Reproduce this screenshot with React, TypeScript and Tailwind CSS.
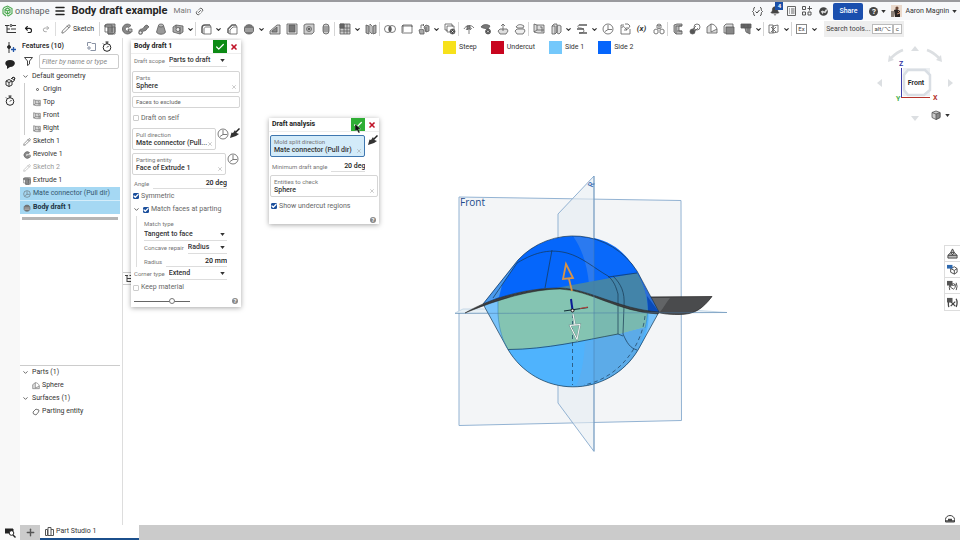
import React from 'react';
import { Menu, Link2, Undo2, Redo2, ChevronDown, Check, X, Bell, Plus, Pencil } from 'lucide-react';

const GLYPHS: Record<string, React.ReactNode> = {
  extrude: (
    <>
      <path d="M1 2l2-1h8v8l-2 2H4V4H1z" fill="#aaa" />
      <path d="M1 2h7v7M1 2v7h3M4 4h7v7H4z" />
      <path d="M6 4v7M8 4v7" />
    </>
  ),
  revolve: (
    <>
      <path d="M10 2.500A5 5 0 1 0 10 9.500L7.500 7.500A2 2 0 1 1 7.500 4.500z" fill="#888" />
      <path d="M7 6h4v3H8z" fill="#bbb" />
    </>
  ),
  sweep: (
    <>
      <path d="M1 9c0-2 1-3 3-3s2-4 5-4l2 2c-2 0-2 4-5 4-1 0-2 1-2 3H1z" fill="#888" />
      <circle cx="2.500" cy="9.500" r="1.500" fill="#eee" />
    </>
  ),
  loft: (
    <>
      <path d="M3.500 2.500L1.500 9c1 3 8 3 9 0l-2-6.500z" fill="#999" />
      <ellipse cx="6" cy="2.500" rx="2.500" ry="1.500" fill="#bbb" />
    </>
  ),
  thicken: (
    <>
      <path d="M1 4l3-2 7 1v6l-3 2-7-2z" fill="#aaa" />
      <circle cx="6" cy="6.500" r="2" fill="#eee" />
      <path d="M4 2v3M8 4v7" />
    </>
  ),
  fillet: (
    <>
      <path d="M2 10V5c0-2 1-3 3-3h5" strokeWidth="1.500" />
      <path d="M2 10l2 1V6c0-1 1-2 2-2h5l-1-2M11 4v7H4" />
    </>
  ),
  chamfer: (
    <>
      <path d="M2 10V6l4-4h4" strokeWidth="1.500" />
      <path d="M2 10l2 1V7l3-3h4l-1-2M11 4v7H4" />
    </>
  ),
  draft: (
    <>
      <path d="M1.500 5C2 .5 10 .5 10.500 5v3c-1 4-8 4-9 0z" fill="#777" />
      <path d="M2 6h8M2 8h8" stroke="#ddd" />
    </>
  ),
  rib: (
    <>
      <path d="M1 8l7-6h3v9H1z" fill="#ccc" />
      <path d="M3 8l5-4v5H3z" fill="#888" />
    </>
  ),
  shell: (
    <>
      <path d="M1 1h10v10H1z" fill="#ddd" />
      <path d="M3 2h6v7H3z" fill="#777" />
    </>
  ),
  hole: (
    <>
      <path d="M1 2l2-1h8v8l-2 2H1z" fill="#ccc" />
      <circle cx="6" cy="6" r="2.500" />
      <circle cx="6" cy="6" r="1" fill="#444" />
    </>
  ),
  thread: (
    <>
      <rect x="3" y="1" width="6" height="10" rx="3" fill="#ccc" />
      <path d="M3 4h6M3 6h6M3 8h6" />
    </>
  ),
  pattern: (
    <>
      <path d="M1 1h10v10H1z" fill="#ccc" />
      <path d="M5 1v10M1 5h10M8 1v10M1 8h10" />
      <path d="M1 1h4v4H1z" fill="#666" />
    </>
  ),
  mirror: (
    <>
      <path d="M1 2l3 1v8l-3-1zM11 2L8 3v8l3-1z" fill="#aaa" />
      <path d="M5 1l2 2v8L5 9z" />
    </>
  ),
  boolean: (
    <>
      <circle cx="4" cy="6" r="3.500" />
      <circle cx="8" cy="6" r="3.500" />
      <path d="M6 3.500v5" strokeWidth="2" />
    </>
  ),
  split: (
    <>
      <path d="M1 3h10v7H1z" />
      <path d="M1 3l1-1h9v2M2 2v7" />
    </>
  ),
  transform: (
    <>
      <path d="M1 7l2-1 3 1v4H2zM6 4l2-2 3 1v5L8 9z" fill="#aaa" />
      <path d="M3 5V2h3M5 1l1 1-1 1M8 4v5" />
    </>
  ),
  remove: (
    <>
      <path d="M1 1h7v2h2v5M1 1v6h2v2h3M3 3h6M3 3v5" />
      <circle cx="8.500" cy="8.500" r="2.500" fill="#444" />
      <path d="M7.500 7.500l2 2M9.500 7.500l-2 2" stroke="#fff" />
    </>
  ),
  face: (
    <>
      <path d="M1 6c2-4 7-5 10-1M3 7c2-3 4-3 6-1M6 11V5M4 7l2-2 2 2" />
      <path d="M4 3h3v3H4z" fill="#888" />
    </>
  ),
  deleteFace: (
    <>
      <path d="M1 4c2-3 6-3 9-1L8 6 3 5z" fill="#777" />
      <circle cx="8" cy="8.500" r="2.500" fill="#444" />
      <path d="M7 7.500l2 2M9 7.500l-2 2" stroke="#fff" />
    </>
  ),
  moveFace: (
    <>
      <path d="M1 8l2-2h7l1 2-2 3H3z" fill="#ddd" />
      <path d="M6 8V1M4 3l2-2 2 2" />
    </>
  ),
  offsetFace: <path d="M1 8l2-2h7l1 2-2 3H3zM2 4c2-3 5-3 8-1l-1 2H4z" fill="#eee" />,
  plane: (
    <>
      <path d="M1 1l3 1h7v8H5L1 9z" fill="#ddd" />
      <path d="M4 2v5h7M4 7l-3 2M7 4h2v5" />
    </>
  ),
  helix: (
    <>
      <path d="M2 3l2-2h3v8l-2 2H2zM7 3l2-1 2 1v6l-2 2-2-1z" fill="#ddd" />
      <path d="M5 3v8M2 3h3" />
    </>
  ),
  curve: (
    <>
      <path d="M3 2h8M1 6h7M3 10h8" strokeWidth="1.600" />
      <path d="M3 2C1 3 2 5 4 5s4 1 4 3-4 2-5 2" />
    </>
  ),
  mate: (
    <>
      <circle cx="6" cy="6" r="5" />
      <path d="M6 2v4.500h4M6 6.500L3 8.500" />
    </>
  ),
  importer: (
    <>
      <path d="M5 2H2v9h9V6" />
      <path d="M3 5c0-2 2-2 3 0l2 2M8 4v3H5M6 1h3l2 2-2 3" />
    </>
  ),
  composite: (
    <>
      <path d="M4 2l2-1 2 1v3L6 6 4 5zM1 7l2-1 2 1v3l-2 1-2-1zM7 7l2-1 2 1v3l-2 1-2-1z" />
      <path d="M4 2l2 1 2-1M6 3v3" />
    </>
  ),
  frame: (
    <>
      <path d="M2 2l3-1h5v2H7v5h3v3H4L2 9z" fill="#bbb" />
      <path d="M4 3h6M4 3v8M5 8h5" />
    </>
  ),
  chain: (
    <>
      <circle cx="3.500" cy="8.500" r="2.500" fill="#555" />
      <circle cx="8" cy="4" r="3" />
      <path d="M4 6l3-3M6 8l3-3" />
    </>
  ),
  bend: (
    <>
      <path d="M1 4l4-3v8l6-3v4H1z" fill="#ddd" />
      <path d="M5 1c3 0 5 2 6 5" />
    </>
  ),
  block: (
    <>
      <path d="M1 3l2-2h7v7l-2 2H1z" fill="#ddd" />
      <path d="M3 4h8v7H3z" fill="#888" />
    </>
  ),
  tab: (
    <>
      <path d="M1 1h10v4H1z" fill="#666" />
      <path d="M5 5h5v6L6 9z" fill="#999" />
      <path d="M4 1v4M8 1v9" />
    </>
  ),
  flange: <path d="M1 2h4v8H1zM5 3l5-1v7l-5 1zM3 4l5 5M8 4L3 9" />,
};

const SmallIcon = ({ name, size = 12 }: { name: string; size?: number }) => (
  <svg
    width={size}
    height={size}
    viewBox="0 0 12 12"
    fill="none"
    stroke="currentColor"
    strokeWidth="0.800"
    strokeLinejoin="round"
    className="shrink-0 text-[#5c5c5c]"
    aria-hidden="true"
  >
    {GLYPHS[name]}
  </svg>
);

// '|' draws a divider, 'v' the arrow that opens a tool group
const TOOLS =
  '| extrude revolve sweep loft thicken v | fillet v chamfer draft v rib shell hole thread | pattern v mirror | boolean split transform v remove | face deleteFace moveFace offsetFace | plane helix v curve v mate importer (x) composite | frame chain bend block tab v | flange v | Ex v'.split(
    ' '
  );

const Caret = () => (
  <svg width="5" height="3" viewBox="0 0 6 4" className="shrink-0" aria-hidden="true">
    <path d="M0 0h6L3 4z" fill="#333" />
  </svg>
);

function Header() {
  return (
    <header className="flex h-5 items-center border-t-2 border-[#9a9a9e] bg-[#f7f8fa] pl-0.5 pr-[3px]">
      <svg width="11" height="12" viewBox="0 0 22 24" fill="none" stroke="#4aa84f" strokeWidth="2.200">
        <path d="M4 5l7-3 9 5v10l-7 5-3-1M2 8v9l6 5M4 5l-2 3" />
        <path d="M6 9l5-3 5 3v6l-5 3-5-3zM6 9l5 3 5-3M11 12v6" />
      </svg>
      <span className="ml-0.5 text-[9px] leading-4 text-[#5c5f63]">onshape</span>
      <button aria-label="Main menu" className="ml-[5px]">
        <Menu size={12} strokeWidth={3} className="text-[#222]" />
      </button>
      <h1 className="ml-[5px] whitespace-nowrap text-[11px] font-bold leading-4 text-[#252525]">Body draft example</h1>
      <span className="ml-1.5 text-[8px] text-[#777]">Main</span>
      <Link2 size={9} className="ml-1 -rotate-45 text-[#444]" />
      <div className="ml-auto flex shrink-0 items-center">
        <button aria-label="Configurations" className="flex w-4 justify-center">
          <svg width="11" height="9" viewBox="0 0 11 9" fill="none" stroke="#444">
            <path d="M3 .5c-2 0-1 2-1.500 3L.5 4.500l1 1C2 6.500 1 8.500 3 8.500M8 .5c2 0 1 2 1.500 3l1 1-1 1C9 6.500 10 8.500 8 8.500M3.500 4.500l1.500 1.500 2.500-3" />
          </svg>
        </button>
        <button aria-label="Notifications" className="relative ml-0.5 flex w-4 justify-center">
          <Bell size={10} fill="#444" className="text-[#444]" />
          <span className="absolute -top-1 left-2 h-2 w-2 bg-[#1b50a8] text-center text-[6px] font-bold leading-2 text-white">
            4
          </span>
        </button>
        <button aria-label="Release management" className="flex w-4 justify-center">
          <svg width="9" height="10" viewBox="0 0 9 10" fill="none" stroke="#666">
            <path d="M.5.5h8v9h-8zM2 3h1M4 3h3.500M2 5h1M4 5h3.500M2 7h1M4 7h3.500" />
          </svg>
        </button>
        <button aria-label="App store" className="flex w-4 justify-center">
          <svg width="10" height="10" viewBox="0 0 10 10" fill="none" stroke="#555">
            <path d="M.5.5h3v3h-3zM.5 6h3v3h-3zM6 6h3v3H6zM7.500 0v4.500M5.500 2.500h4.500" />
          </svg>
        </button>
        <button aria-label="Learning center" className="flex w-4 justify-center">
          <svg width="9" height="9" viewBox="0 0 10 10">
            <circle cx="5" cy="5" r="4.800" fill="#444" />
            <path d="M2 5l2-1 2 1 2-3 1 2-2 3-2-1-1 2z" fill="#ddd" />
          </svg>
        </button>
        <button className="ml-0.5 h-[17px] w-[30px] rounded-[2px] bg-[#1b4fae] text-[7px] font-medium text-white">
          Share
        </button>
        <button aria-label="Help" className="ml-1.5 flex items-center gap-[3px]">
          <span className="h-[9px] w-[9px] rounded-full bg-[#444] text-center text-[8px] font-bold leading-[9px] text-white">
            ?
          </span>
          <Caret />
        </button>
        <button className="ml-[5px] flex items-center gap-[3px] text-[7px] text-[#333]">
          <svg width="11" height="12" viewBox="0 0 11 12">
            <path fill="#ead9cc" d="M0 0h11v12H0z" />
            <path fill="#8b8179" d="M0 6h3v6H0z" />
            <path fill="#2b2523" d="M3 5l3-1 3 2v6H4z" />
            <circle cx="6" cy="3" r="1.600" fill="#6b4636" />
            <path d="M7 6l2 2-3 1" stroke="#c58d70" fill="none" />
          </svg>
          <span className="whitespace-nowrap">Aaron Magnin</span>
          <Caret />
        </button>
      </div>
    </header>
  );
}

function Toolbar() {
  return (
    <div className="flex h-[18px] items-center overflow-hidden bg-white text-[#444]" role="toolbar">
      <button aria-label="Undo" className="flex w-[17px] shrink-0 justify-center">
        <Undo2 size={9} strokeWidth={3} className="text-[#222]" />
      </button>
      <button aria-label="Redo" className="flex w-[17px] shrink-0 justify-center">
        <Redo2 size={8} strokeWidth={3} className="text-[#aaa]" />
      </button>
      <span className="mx-px h-3.5 w-px shrink-0 bg-[#ddd]" />
      <button className="flex w-[42px] shrink-0 items-center gap-0.5 pl-1 text-[7px] text-[#333]">
        <Pencil size={10} strokeWidth={1.5} />
        Sketch
      </button>
      {TOOLS.map((tool, i) => {
        if (tool === '|') {
          return <span key={i} className="mr-px h-3.5 w-px shrink-0 bg-[#d5d5d5]" />;
        }
        if (tool === 'v') {
          return (
            <button key={i} aria-label="More tools" className="flex w-[9px] shrink-0 justify-center">
              <ChevronDown size={7} strokeWidth={4} className="text-[#333]" />
            </button>
          );
        }
        return (
          <button key={i} aria-label={tool} className="flex w-[17px] shrink-0 items-center justify-center">
            {tool === '(x)' ? (
              <span className="text-[8px] font-bold italic text-[#333]">(x)</span>
            ) : tool === 'Ex' ? (
              <span className="border border-[#888] px-px text-[6px] leading-2">Ex</span>
            ) : (
              <SmallIcon name={tool} />
            )}
          </button>
        );
      })}
      <button className="ml-[5px] flex h-4 w-20 shrink-0 items-center justify-center whitespace-nowrap bg-[#eee] text-[7px] text-[#444]">
        Search tools...
        <kbd className="ml-0.5 border border-[#bbb] bg-white px-px font-[inherit] text-[6px] leading-2">alt/⌥</kbd>
        <kbd className="border border-[#bbb] bg-white px-0.5 font-[inherit] text-[6px] leading-2">c</kbd>
      </button>
    </div>
  );
}

function LeftRail() {
  return (
    <nav className="flex w-5 shrink-0 flex-col items-center bg-[#f8f8f8] text-[#333]">
      <button aria-label="Feature list" className="flex h-[18px] items-center">
        <svg width="11" height="10" viewBox="0 0 11 10" fill="none" stroke="currentColor">
          <path d="M0 1.500h4M2 1v8M2 5h3M7 1.500h4M6 5h5M2 8.500h9" />
          <circle cx="6" cy="1.500" r="1" />
        </svg>
      </button>
      <button aria-label="Add version" className="flex h-[18px] items-center">
        <svg width="11" height="11" viewBox="0 0 11 11" fill="none" stroke="currentColor">
          <path d="M4 0v11" />
          <circle cx="4" cy="5" r="1.500" fill="#222" />
          <path d="M8.500 5v5M6 7.500h5" stroke="#2256a8" strokeWidth="1.300" />
        </svg>
      </button>
      <button aria-label="Comments" className="flex h-[16px] items-center">
        <svg width="10" height="9" viewBox="0 0 10 9">
          <path d="M5 0c7 0 6 7 0 7L2 9V6C-1 4 0 0 5 0z" fill="#222" />
        </svg>
      </button>
      <button aria-label="Integrations" className="flex h-[19px] items-center">
        <svg width="11" height="11" viewBox="0 0 11 11" fill="none" stroke="currentColor">
          <path d="M1 5l3-1.500L7 5v4l-3 1.500L1 9zM1 5l3 1.500L7 5M4 6.500v4M6 3l2-2 2 1-1 3-2 1" />
          <circle cx="8.500" cy="2.500" r="1" />
        </svg>
      </button>
      <button aria-label="History" className="flex h-[18px] items-center">
        <Stopwatch />
      </button>
      <button aria-label="Search" className="mb-0.5 mt-auto">
        <svg width="11" height="10" viewBox="0 0 11 10" fill="none" stroke="#222">
          <path d="M0 1h8v2L5 5H0z" fill="#222" />
          <circle cx="6.500" cy="5" r="2.300" fill="#fff" />
          <path d="M8 7l2.500 2.500" strokeWidth="1.400" />
        </svg>
      </button>
    </nav>
  );
}

function Stopwatch() {
  return (
    <svg width="10" height="11" viewBox="0 0 10 11" fill="none" stroke="#222">
      <circle cx="5" cy="6.500" r="3.800" />
      <path d="M3.500 1h3M5 1v2M5 6.500l1.500-1.500M1 2.500l1 1" />
    </svg>
  );
}

interface TreeRow {
  label: string;
  icon: string;
  state?: 'muted' | 'selected' | 'active';
}

const FEATURES: TreeRow[] = [
  { label: 'Sketch 1', icon: 'pencil' },
  { label: 'Revolve 1', icon: 'revolve' },
  { label: 'Sketch 2', icon: 'pencil', state: 'muted' },
  { label: 'Extrude 1', icon: 'extrude' },
  { label: 'Mate connector (Pull dir)', icon: 'mate', state: 'selected' },
  { label: 'Body draft 1', icon: 'draft', state: 'active' },
];

function GroupRow({ label }: { label: string }) {
  return (
    <button className="flex h-[13px] w-full items-center gap-[3px] pl-0.5 text-left">
      <ChevronDown size={7} strokeWidth={3} className="shrink-0 text-[#555]" />
      {label}
    </button>
  );
}

function FeaturePanel() {
  return (
    <aside className="flex w-[103px] shrink-0 flex-col border-r border-[#ddd] bg-white text-[7px] leading-[13px] text-[#333]">
      <div className="flex h-4 items-center pl-0.5 pt-px">
        <h2 className="font-medium text-[#222]">Features (10)</h2>
        <button aria-label="Add folder" className="ml-auto">
          <svg width="9" height="9" viewBox="0 0 9 9" fill="none" stroke="#8a93a5">
            <path d="M.5 4V.5H4l1 1h3.500v7h-5M0 6h4M2 4v4" />
          </svg>
        </button>
        <button aria-label="Rollback history" className="ml-1.5 mr-2.5">
          <Stopwatch />
        </button>
      </div>
      <div className="flex items-center gap-1.5 pl-1 pr-[3px]">
        <svg width="9" height="9" viewBox="0 0 9 9" fill="none" stroke="#444" className="shrink-0">
          <path d="M.5.5h8L5.500 4v3L3.500 8.500V4z" />
        </svg>
        <input
          aria-label="Filter features"
          placeholder="Filter by name or type"
          className="h-[15px] w-full min-w-0 rounded-[2px] border border-[#ccc] px-0.5 italic leading-3 outline-none placeholder:text-[#888]"
        />
      </div>
      <div className="pr-0.5 pt-px">
        <GroupRow label="Default geometry" />
        <ul className="ml-1 border-l border-[#ccc] pl-2">
          {['Origin', 'Top', 'Front', 'Right'].map((name) => (
            <li key={name}>
              <button className="flex h-[13px] items-center gap-0.5">
                <span className="flex w-2 shrink-0 justify-center">
                  {name === 'Origin' ? (
                    <span className="h-[3px] w-[3px] rounded-full border border-[#555]" />
                  ) : (
                    <SmallIcon name="plane" size={8} />
                  )}
                </span>
                {name}
              </button>
            </li>
          ))}
        </ul>
        <ul>
          {FEATURES.map(({ label, icon, state }) => (
            <li
              key={label}
              className={
                state === 'active'
                  ? 'bg-[#a5d8f3] font-bold text-[#1c3141]'
                  : state === 'selected'
                    ? 'border-b border-[#d4edfa] bg-[#a5d8f3] text-[#34566d]'
                    : state === 'muted'
                      ? 'text-[#999]'
                      : ''
              }
            >
              <button className="flex h-[13px] w-full items-center gap-0.5 whitespace-nowrap pl-[3px] text-left">
                {icon === 'pencil' ? (
                  <Pencil size={8} strokeWidth={1.5} className="shrink-0" />
                ) : (
                  <SmallIcon name={icon} size={8} />
                )}
                {label}
              </button>
            </li>
          ))}
        </ul>
        <div className="ml-0.5 mr-0.5 mt-[3px] h-[3px] bg-[#b5b5b5]" />
      </div>
      <div className="mr-0.5 mt-auto h-40 border-t border-[#ccc]">
        <GroupRow label="Parts (1)" />
        <button className="flex h-[13px] items-center gap-0.5 pl-3">
          <SmallIcon name="bend" size={8} />
          Sphere
        </button>
        <GroupRow label="Surfaces (1)" />
        <button className="flex h-[13px] items-center gap-0.5 pl-3">
          <svg width="8" height="8" viewBox="0 0 8 8" fill="none" stroke="#777">
            <path d="M1 4l3-3 1 .5 2 .5-.5 2L4 7l-1-.5L1.500 6z" />
          </svg>
          Parting entity
        </button>
      </div>
    </aside>
  );
}

function DialogHead({ title, confirm }: { title: string; confirm: string }) {
  return (
    <div className="flex h-[13px] items-center pl-[3px] shadow-[0_1px_0_#eee]">
      <h3 className="mr-auto font-bold text-[#222]">{title}</h3>
      <button aria-label="Accept" className={`flex h-[13px] w-[14px] items-center justify-center ${confirm}`}>
        <Check size={10} strokeWidth={3} className="text-white" />
      </button>
      <button aria-label="Cancel" className="flex w-[14px] justify-center">
        <X size={8} strokeWidth={5} className="text-[#c01328]" />
      </button>
    </div>
  );
}

interface EntityBoxProps {
  label: string;
  value: string;
  active?: boolean;
}

function EntityBox({ label, value, active }: EntityBoxProps) {
  return (
    <div
      className={`min-w-0 flex-1 rounded-[2px] border pl-[3px] ${
        active ? 'border-[#3f77b0] bg-[#d3ebf9]' : 'border-[#d5d5d5]'
      }`}
    >
      <div className="pt-px text-[6px] leading-[9px] text-[#777]">{label}</div>
      <div className="flex items-center justify-between pb-px leading-[9px] text-[#333]">
        <span className="whitespace-nowrap font-medium">{value}</span>
        <button aria-label={`Clear ${label}`} className="mr-0.5 shrink-0">
          <X size={6} strokeWidth={2} className="text-[#999]" />
        </button>
      </div>
    </div>
  );
}

function CheckField({ label, checked = false }: { label: string; checked?: boolean }) {
  return (
    <label className="flex items-center gap-0.5 whitespace-nowrap text-[#666]">
      <span className="relative flex h-1.5 w-1.5">
        <input
          type="checkbox"
          defaultChecked={checked}
          className="peer h-1.5 w-1.5 appearance-none rounded-[1px] border border-[#ccc] bg-white checked:border-[#1b4f9c] checked:bg-[#1b4f9c]"
        />
        <Check
          size={6}
          strokeWidth={5}
          className="pointer-events-none absolute inset-0 text-white opacity-0 peer-checked:opacity-100"
        />
      </span>
      {label}
    </label>
  );
}

function SelectField({ label, value, stacked }: { label: string; value: string; stacked?: boolean }) {
  return (
    <label className={stacked ? 'block' : 'flex items-center gap-1'}>
      <span className="block whitespace-nowrap text-[6px] leading-[9px] text-[#777]">{label}</span>
      <span className="flex min-w-0 flex-1 items-center border-b border-[#ddd] pr-0.5">
        <select className="h-3 min-w-0 flex-1 appearance-none bg-transparent font-medium text-[#333] outline-none">
          <option>{value}</option>
        </select>
        <Caret />
      </span>
    </label>
  );
}

function ValueField({ label, value, wide }: { label: string; value: string; wide?: boolean }) {
  return (
    <label className="flex items-center gap-1 whitespace-nowrap text-[6px] text-[#777]">
      {label}
      <input
        defaultValue={value}
        className={`h-[11px] min-w-0 border-b border-[#ddd] text-right text-[7px] font-medium text-[#222] outline-none ${
          wide ? 'w-[34px]' : 'flex-1'
        }`}
      />
    </label>
  );
}

const Pin = () => (
  <svg width="10" height="10" viewBox="0 0 10 10" className="shrink-0" aria-hidden="true">
    <path d="M9.500.5L5 5" stroke="#222" strokeWidth="1.500" />
    <path d="M0 10l1.500-5.500L3 5l2-3 1.500 3L9 6 6 8z" fill="#333" />
  </svg>
);

const HelpDot = () => (
  <button
    aria-label="Help"
    className="h-1.5 w-1.5 rounded-full bg-[#888] text-center text-[6px] font-bold leading-1.5 text-white"
  >
    ?
  </button>
);

function BodyDraftDialog() {
  return (
    <section className="absolute left-2 top-0.5 w-[110px] bg-white text-[7px] shadow-[0_1px_5px_rgba(0,0,0,0.35)]">
      <DialogHead title="Body draft 1" confirm="bg-[#0c8a14]" />
      <div className="pl-[3px] pr-[14px] pt-px">
        <SelectField label="Draft scope" value="Parts to draft" />
      </div>
      <div className="flex flex-col gap-[3px] px-px pt-1">
        <div className="flex">
          <EntityBox label="Parts" value="Sphere" />
        </div>
        <button className="h-3 rounded-[2px] border border-[#d5d5d5] pl-[3px] text-left text-[6px] leading-[10px] text-[#666]">
          Faces to exclude
        </button>
        <div className="flex h-[14px] items-center pl-px">
          <CheckField label="Draft on self" />
        </div>
        <div className="flex items-start gap-px">
          <EntityBox label="Pull direction" value="Mate connector (Pull..." />
          <SmallIcon name="mate" />
          <Pin />
        </div>
        <div className="flex items-start gap-px pr-px">
          <EntityBox label="Parting entity" value="Face of Extrude 1" />
          <SmallIcon name="mate" />
        </div>
      </div>
      <div className="pl-[3px] pr-[14px] pt-[3px]">
        <ValueField label="Angle" value="20 deg" />
      </div>
      <div className="flex h-[14px] items-center pl-0.5">
        <CheckField label="Symmetric" checked />
      </div>
      <div className="flex h-[13px] items-center gap-[3px] pl-0.5">
        <ChevronDown size={7} strokeWidth={3} className="text-[#555]" />
        <CheckField label="Match faces at parting" checked />
      </div>
      <div className="ml-[5px] mr-[14px] border-l border-[#ddd] pl-[7px] pt-[3px]">
        <SelectField label="Match type" value="Tangent to face" stacked />
        <SelectField label="Concave repair" value="Radius" />
        <div className="pt-0.5">
          <ValueField label="Radius" value="20 mm" />
        </div>
      </div>
      <div className="pl-[3px] pr-[14px]">
        <SelectField label="Corner type" value="Extend" />
      </div>
      <div className="flex h-[15px] items-center pl-0.5">
        <CheckField label="Keep material" />
      </div>
      <div className="flex h-3 items-center justify-between pl-[3px] pr-[3px]">
        <input
          type="range"
          aria-label="Preview transparency"
          defaultValue={70}
          className="h-px w-14 appearance-none bg-[#666] [&::-webkit-slider-thumb]:h-1.5 [&::-webkit-slider-thumb]:w-1.5 [&::-webkit-slider-thumb]:appearance-none [&::-webkit-slider-thumb]:rounded-full [&::-webkit-slider-thumb]:border [&::-webkit-slider-thumb]:border-solid [&::-webkit-slider-thumb]:border-[#777] [&::-webkit-slider-thumb]:bg-white"
        />
        <HelpDot />
      </div>
    </section>
  );
}

function DraftAnalysisDialog() {
  return (
    <section className="absolute left-[146px] top-20 w-[110px] bg-white text-[7px] shadow-[0_1px_5px_rgba(0,0,0,0.35)]">
      <DialogHead title="Draft analysis" confirm="bg-[#2fae35]" />
      <div className="flex items-start gap-[3px] px-px pt-1">
        <EntityBox label="Mold split direction" value="Mate connector (Pull dir)" active />
        <Pin />
      </div>
      <div className="flex h-[18px] items-center pl-[3px] pt-px">
        <ValueField label="Minimum draft angle" value="20 deg" wide />
      </div>
      <div className="flex px-px">
        <EntityBox label="Entities to check" value="Sphere" />
      </div>
      <div className="flex h-[18px] items-center pl-0.5">
        <CheckField label="Show undercut regions" checked />
      </div>
      <div className="flex h-[9px] items-center justify-end pr-[3px]">
        <HelpDot />
      </div>
      <svg width="7" height="9" viewBox="0 0 7 9" className="absolute left-[86px] top-1.5" aria-hidden="true">
        <path d="M0 0l6 5H3.500L5 8.500 3.500 9 2 6 0 7z" fill="#111" stroke="#fff" strokeWidth="0.300" />
      </svg>
    </section>
  );
}

function Scene() {
  return (
    <svg
      width="290"
      height="295"
      viewBox="445 165 290 295"
      className="absolute left-[322px] top-[127px] font-['Open_Sans',sans-serif]"
      role="img"
      aria-label="Draft analysis of the sphere"
    >
      <path d="M459 197l222 3.500.5 220-222.500 5z" fill="#f3f5f7" stroke="#93b3d3" />
      <path d="M558 214l36-38v275.500L558 403z" fill="#e6edf1" fillOpacity=".6" stroke="#93b3d3" />
      <path d="M455 313l8-4h215l49 3.500z" fill="#e8f0f5" stroke="#b5cde1" strokeWidth=".7" />
      <text x="460" y="206" fontSize="10" fill="#1d4b8c">
        Front
      </text>
      <text x="588" y="187" fontSize="8" fontWeight="600" fill="#3d6cb3" transform="rotate(-65 591 184)">
        R
      </text>

      {/* loft surface behind the body */}
      <path d="M646 297l66-.5c-10 13-18 18-33 18-12 0-18-1-24-3z" fill="#4a4b4d" stroke="#222" strokeWidth=".7" />
      <path d="M648 298h22c-4 5-6 9-10 14l-6-1z" fill="#626466" />

      {/* lower half */}
      <path d="M483 304l25 45.500A75.500 75.500 0 0 0 638 350l21-38-40-25H520z" fill="#79c3fa" />
      <path d="M498 300c-1 20 4 37 10 49.500A75.500 75.500 0 0 0 638 350c9-13 12-26 10-45z" fill="#4fb3fd" />
      <path d="M594 330v53c20-5 34-16 44-33l9-25z" fill="#5cabe8" />
      <path d="M585 342c-1 19-4 34-9 44 7 0 12-1 18-3v-43z" fill="#5aaff2" />
      <path
        d="M498 298v16c1 16 5 27 10 35.500 38-1 75-9 110-15.500l27-7c3-12 3-20 1-32L560 285z"
        fill="#84c4b2"
      />
      <path d="M594 290v49l25-5 25-7c4-10 4-18 3-29l-4-8z" fill="#79b9b0" />

      {/* upper half */}
      <path
        d="M483 304l35-44A75.500 75.500 0 0 1 637 271l22 42C615 309 590 288 560 288C530 288 505 295 483 304z"
        fill="#0566fb"
      />
      <path d="M483 304l35-43-16 24-3 12z" fill="#4a99ec" />
      <path d="M573 236c9 13 14 28 16 48l5 1v-46z" fill="#2b7af0" />
      <path d="M594 238v43l42-10c-9-17-23-29-42-33z" fill="#0969fa" />
      <path d="M556 288l81-15c7 10 11 24 11 39C615 309 590 288 560 288z" fill="#4384a9" />
      <path d="M637 273l22 39-11-1c0-13-4-26-11-38z" fill="#2d6ed8" />
      <path d="M647 296l12 16-11-1z" fill="#0a4bb8" />

      <g fill="none" stroke="#173650" strokeWidth=".7">
        <path d="M483 304l35-44A75.500 75.500 0 0 1 637 271l22 41-21 38A75.500 75.500 0 0 1 508 349.500z" />
        <path d="M517 263c20-12 34-14 50-10 15 4 27 15 41 23 6 5 8 11 10 18v40" />
        <path d="M552 250l-7 38M517 263l-24 35M613 276c8 8 12 16 11 30l-1 28c4 9 7 14 14 16M608 277l29-4" />
        <path d="M508 349.500c38 0 75-9 110-15.500l5 2" />
      </g>
      <path d="M498 298v16c1 16 5 27 10 35.500M646 297c2 10 2 20-1 31" fill="none" stroke="#3b87b7" strokeWidth=".6" />
      <path
        d="M465 313C487 300 522 288 560 288C590 289 618 309 659 312l-1 2C618 312 590 290 560 289C532 289 497 300 470 311z"
        fill="#3b3e41"
        stroke="#222"
        strokeWidth=".5"
      />
      <g fill="none" stroke="#244a6b" strokeWidth=".8" strokeDasharray="4 3">
        <path d="M572.500 314v71M645 316c-3 30-26 62-61 69" />
      </g>
      <path d="M455 313.500l272-1M594 176v275" fill="none" stroke="#4678a8" strokeOpacity=".5" />

      {/* pull direction manipulator */}
      <path d="M566 264l-3 15 10-1zM569 279l3 12" fill="none" stroke="#d79348" strokeWidth="1.800" />
      <path d="M571 299l1.500 11" stroke="#0a1c95" strokeWidth="2" />
      <path d="M564 311l24-3.500" stroke="#112c36" strokeWidth="1.200" />
      <path d="M580 308.500l8-1.500" stroke="#b9463d" strokeWidth="1.200" />
      <circle cx="572.500" cy="310.500" r="1.500" fill="#eee" stroke="#111" />
      <g fill="none">
        <path d="M573 314l2 11M570 325.500l10-1-3 15z" stroke="#7f9c98" strokeWidth="2" />
        <path d="M573 314l2 11M570 325.500l10-1-3 15z" stroke="#f2f6f5" />
      </g>
    </svg>
  );
}

function ViewCube() {
  return (
    <div className="absolute right-1.5 top-1 flex flex-col items-end">
      <svg width="78" height="82" viewBox="876 42 78 82" role="img" aria-label="View orientation">
        <g fill="#dcdfe2">
          <path d="M915 46l4 5h-8zM915 121l4-5h-8zM877 83l5-4v8zM953 83l-5-4v8z" />
          <path d="M888 62l1-7 5 5zM942 62l-1-7-5 5z" />
        </g>
        <path d="M891 58q6-6 12-8M939 58q-6-6-12-8" fill="none" stroke="#dcdfe2" strokeWidth="2.500" />
        <path d="M903 68h27v28h-27z" fill="#eceff2" />
        <path d="M908 70h17l5 5v15l-6 5h-16l-4-5V75z" fill="#fff" stroke="#d9dee4" strokeWidth="2.500" />
        <path d="M901.500 97V68" stroke="#3d3da8" />
        <path d="M901 97.500h29" stroke="#b5332b" />
        <text x="916" y="85" fontSize="7" fontWeight="600" textAnchor="middle" fill="#222">
          Front
        </text>
        <g fontSize="7" fontWeight="700">
          <text x="899" y="66" fill="#3535a5">Z</text>
          <text x="933" y="100" fill="#b5332b">X</text>
          <text x="896" y="101" fill="#3fae49">Y</text>
        </g>
      </svg>
      <button aria-label="View options" className="-mt-3.5 mr-1 flex items-center gap-1">
        <svg width="10" height="10" viewBox="0 0 10 10" stroke="#555" strokeWidth=".8">
          <path d="M1 2.500L5 1l4 1.500v5L5 9.500 1 7.500z" fill="#ccc" />
          <path d="M5 4l4-1.500v5l-4 2z" fill="#888" />
          <path d="M1 2.500L5 4" />
        </svg>
        <Caret />
      </button>
    </div>
  );
}

const LEGEND = [
  { label: 'Steep', swatch: 'bg-[#f7e11b]' },
  { label: 'Undercut', swatch: 'bg-[#c8051f]' },
  { label: 'Side 1', swatch: 'bg-[#74c8fb]' },
  { label: 'Side 2', swatch: 'bg-[#0565fc]' },
];

function Canvas() {
  return (
    <main className="relative min-w-0 flex-1 overflow-hidden bg-white">
      <Scene />
      <ul className="absolute left-80 top-[3px] flex gap-[14px] whitespace-nowrap text-[7px] text-[#333]">
        {LEGEND.map(({ label, swatch }) => (
          <li key={label} className="flex items-center gap-[3px]">
            <span className={`h-[13px] w-[13px] ${swatch}`} />
            {label}
          </li>
        ))}
      </ul>
      <ViewCube />
      <button
        aria-label="Feature list"
        className="absolute left-0 top-[234px] h-[13px] w-3 border border-l-0 border-[#ccc] bg-white"
      >
        <svg width="8" height="9" viewBox="0 0 8 9" fill="none" stroke="#444" className="ml-0.5">
          <path d="M0 1.500h3M4.500 1.500h4M2 1v7M2 4.500h6M2 7.500h6" />
        </svg>
      </button>
      <BodyDraftDialog />
      <DraftAnalysisDialog />
      <div className="absolute right-0 top-[207px] flex flex-col border border-r-0 border-[#ddd] bg-white">
        {['composite', 'config', 'frame', 'vars'].map((name) => (
          <button
            key={name}
            aria-label={name}
            className="flex h-4 w-[15px] items-center justify-center border-b border-[#ddd] last:border-b-0"
          >
            <svg width="11" height="11" viewBox="0 0 12 12" fill="none" stroke="#444" aria-hidden="true">
              {name === 'composite' && <path d="M4 5l2-4 2 4zM1 8l3-3 3 3M5 8l3-3 3 3M1 8v3h10V8z" fill="#bbb" />}
              {name === 'config' && (
                <>
                  <path d="M4 5l4-2 3 2v4l-3 2-4-2zM4 5l4 2 3-2M8 7v4" />
                  <path d="M0 1h6v4H0z" fill="#2d68ae" stroke="none" />
                </>
              )}
              {name === 'frame' && (
                <>
                  <path d="M4 5l3-1 2 1v3L7 10 4 8zM4 5l3 1 2-1M10 3q2 4 0 8M3 5q-1 3 0 6" />
                  <path d="M0 1h6v5H0z" fill="#555" stroke="none" />
                </>
              )}
              {name === 'vars' && (
                <>
                  <path d="M4 5l5 5M9 5l-5 5M10 2q2 4 0 9M2 4q-1 4 0 7" strokeWidth="1.400" />
                  <path d="M0 1h6v5H0z" fill="#555" stroke="none" />
                </>
              )}
            </svg>
          </button>
        ))}
      </div>
      <button aria-label="Mass properties" className="absolute bottom-0.5 right-[5px]">
        <svg width="10" height="8" viewBox="0 0 10 8" fill="none" stroke="#444">
          <path d="M.5 7V4.500a4.500 4 0 0 1 9 0V7z" />
          <path d="M0 6h10M3 4.500h4" strokeWidth="1.500" />
        </svg>
      </button>
    </main>
  );
}

function TabBar() {
  return (
    <footer className="flex h-[15px] bg-[#cbcbcb] text-[7px] text-[#333]">
      <button aria-label="Add tab" className="flex w-5 items-center justify-center">
        <Plus size={11} strokeWidth={3} className="text-[#555]" />
      </button>
      <button className="flex w-[99px] items-center gap-0.5 border-b-2 border-[#1b4f8c] bg-white pl-[5px]">
        <svg width="9" height="9" viewBox="0 0 9 9" fill="none" stroke="#555">
          <path d="M.5 2.500h2v6h-2zM3 .5h3v8H3zM6 2.500h2.500v6H6" />
        </svg>
        Part Studio 1
      </button>
    </footer>
  );
}

export default function App() {
  return (
    <div className="flex h-screen flex-col overflow-hidden bg-white font-['Roboto',sans-serif] text-[#333]">
      <Header />
      <div className="flex min-h-0 flex-1">
        <LeftRail />
        <div className="flex min-w-0 flex-1 flex-col">
          <Toolbar />
          <div className="flex min-h-0 flex-1">
            <FeaturePanel />
            <Canvas />
          </div>
          <TabBar />
        </div>
      </div>
    </div>
  );
}
